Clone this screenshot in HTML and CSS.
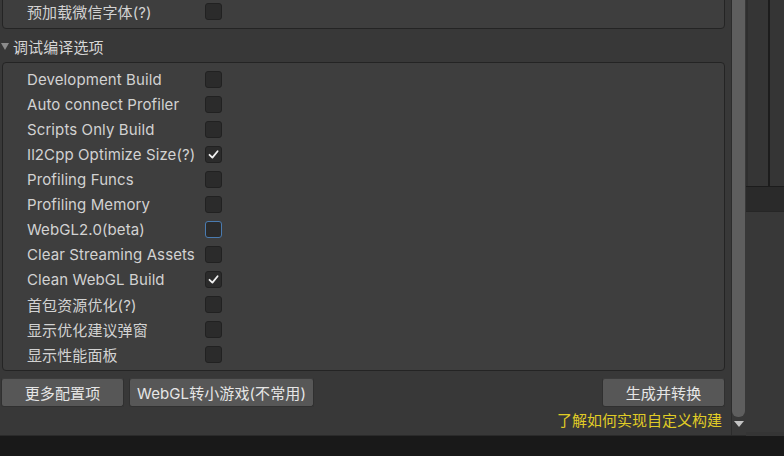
FILE: index.html
```html
<!DOCTYPE html>
<html lang="zh-CN">
<head>
    <meta charset="UTF-8">
    <title>Build Settings</title>
    <link rel="stylesheet" href="styles.css">
</head>
<body>
    <div class="window">
        <div class="inspector">
            <div class="content">
                <div class="box box-top">
                    <div class="row"><span class="label">预加载微信字体(?)</span><span class="check"></span></div>
                </div>

                <div class="foldout"><span class="arrow"></span>调试编译选项</div>

                <div class="box box-debug">
                    <div class="row"><span class="label">Development Build</span><span class="check"></span></div>
                    <div class="row"><span class="label">Auto connect Profiler</span><span class="check"></span></div>
                    <div class="row"><span class="label">Scripts Only Build</span><span class="check"></span></div>
                    <div class="row"><span class="label">Il2Cpp Optimize Size(?)</span><span class="check on"><svg viewBox="0 0 17 17"><path d="M4.5 8.8 L7.4 11.6 L12.6 5.2"/></svg></span></div>
                    <div class="row"><span class="label">Profiling Funcs</span><span class="check"></span></div>
                    <div class="row"><span class="label">Profiling Memory</span><span class="check"></span></div>
                    <div class="row"><span class="label">WebGL2.0(beta)</span><span class="check focus"></span></div>
                    <div class="row"><span class="label">Clear Streaming Assets</span><span class="check"></span></div>
                    <div class="row"><span class="label">Clean WebGL Build</span><span class="check on"><svg viewBox="0 0 17 17"><path d="M4.5 8.8 L7.4 11.6 L12.6 5.2"/></svg></span></div>
                    <div class="row"><span class="label">首包资源优化(?)</span><span class="check"></span></div>
                    <div class="row"><span class="label">显示优化建议弹窗</span><span class="check"></span></div>
                    <div class="row"><span class="label">显示性能面板</span><span class="check"></span></div>
                </div>

                <div class="actions">
                    <button class="btn btn-more">更多配置项</button>
                    <button class="btn btn-convert">WebGL转小游戏(不常用)</button>
                    <button class="btn btn-build">生成并转换</button>
                </div>
                <div class="help"><a href="#" class="help-link">了解如何实现自定义构建</a></div>
            </div>

            <div class="scrollbar">
                <div class="thumb"></div>
                <div class="scroll-down"></div>
            </div>
        </div>

        <div class="side">
            <div class="side-top"><div class="side-split"></div></div>
            <div class="side-band"></div>
            <div class="side-rest"></div>
        </div>
    </div>
</body>
</html>
```

FILE: styles.css
```css
* {
    margin: 0;
    padding: 0;
    box-sizing: border-box;
}

body {
    background: #191919;
    font-family: Inter, "Noto Sans CJK SC", sans-serif;
    font-size: 15px;
    letter-spacing: 0.1px;
    color: #d2d2d2;
    overflow: hidden;
}

.window {
    display: flex;
    height: 436px;
}

/* Inspector panel */
.inspector {
    width: 746px;
    display: flex;
    background: #383838;
    border-bottom: 1px solid #2a2a2a;
}

.content {
    width: 731px;
    overflow: hidden;
}

.box {
    margin-left: 2px;
    width: 723px;
    background: #3e3e3e;
    border: 1px solid #242424;
    border-radius: 4px;
    padding-left: 24px;
}

.box-top {
    margin-top: -7px;
    padding-top: 5px;
    padding-bottom: 4px;
}

.box-debug {
    padding-top: 4px;
    padding-bottom: 3px;
}

.row {
    height: 25px;
    display: flex;
    align-items: center;
}

.label {
    width: 178px;
    white-space: nowrap;
}

.check {
    width: 17px;
    height: 17px;
    background: #2b2b2b;
    border: 1px solid #212121;
    border-radius: 3px;
    display: flex;
    align-items: center;
    justify-content: center;
}

.check svg {
    width: 17px;
    height: 17px;
    flex: none;
}

.check svg path {
    fill: none;
    stroke: #f0f0f0;
    stroke-width: 1.8;
    stroke-linecap: round;
    stroke-linejoin: round;
}

.check.focus {
    border-color: #4a7bb0;
}

/* Foldout header */
.foldout {
    height: 26px;
    margin: 4px 0 3px;
    display: flex;
    align-items: center;
    padding-left: 1px;
    color: #d6d6d6;
}

.arrow {
    width: 0;
    height: 0;
    border-left: 4px solid transparent;
    border-right: 4px solid transparent;
    border-top: 7px solid #8c8c8c;
    margin-right: 4px;
}

/* Buttons */
.actions {
    display: flex;
    gap: 5px;
    margin-top: 7px;
    padding-left: 1px;
    padding-right: 6px;
}

.btn {
    height: 29px;
    background: #575757;
    border: 1px solid #303030;
    border-top-color: #3c3c3c;
    border-radius: 3px;
    color: #e6e6e6;
    font-family: Inter, "Noto Sans CJK SC", sans-serif;
    font-size: 15px;
    letter-spacing: 0.1px;
}

.btn-more {
    width: 123px;
}

.btn-convert {
    width: 185px;
}

.btn-build {
    width: 123px;
    margin-left: auto;
}

.help {
    text-align: right;
    padding-right: 9px;
    margin-top: 3px;
    line-height: 22px;
}

.help-link {
    color: #e0cc26;
    text-decoration: none;
    letter-spacing: 0;
}

/* Scrollbar */
.scrollbar {
    width: 15px;
    border-left: 1px solid #2c2c2c;
    position: relative;
}

.thumb {
    width: 13px;
    height: 417px;
    background: #5e5e5e;
    border-radius: 0 0 6px 6px;
}

.scroll-down {
    width: 0;
    height: 0;
    margin: 4px auto 0;
    border-left: 5px solid transparent;
    border-right: 5px solid transparent;
    border-top: 6px solid #c4c4c4;
}

/* Neighbouring panel */
.side {
    flex: 1;
    display: flex;
    flex-direction: column;
    background: #353535;
}

.side-top {
    height: 186px;
    display: flex;
    border-left: 2px solid #2e2e2e;
}

.side-split {
    margin-left: 20px;
    width: 2px;
    background: #1c1c1c;
}

.side-band {
    height: 26px;
    background: #2a2a2a;
    border-top: 1px solid #1c1c1c;
    border-bottom: 1px solid #262626;
}

.side-rest {
    flex: 1;
    background: #383838;
    margin-bottom: 4px;
}
```
